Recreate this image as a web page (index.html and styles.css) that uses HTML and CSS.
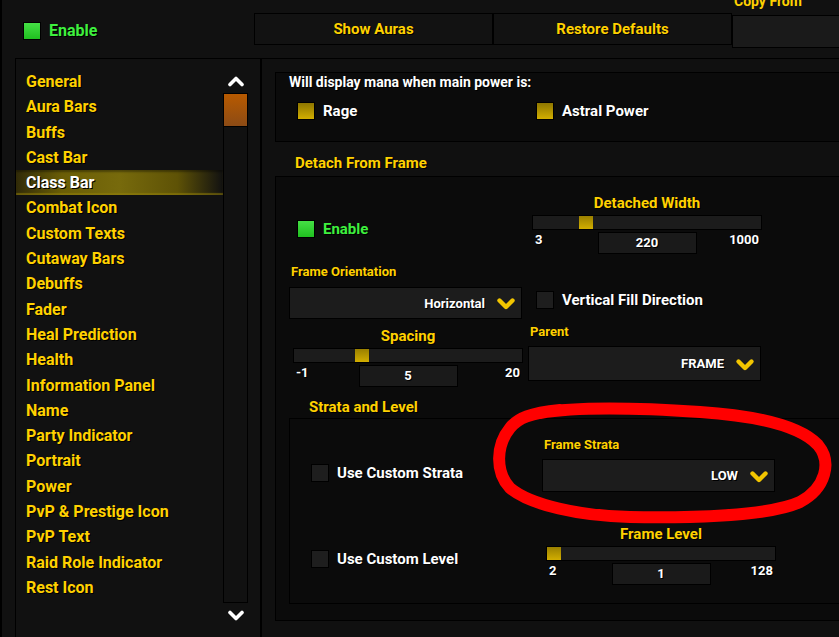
FILE: index.html
```html
<!DOCTYPE html>
<html>
<head>
<meta charset="utf-8">
<title>Unit Frames - Class Bar</title>
<link rel="stylesheet" href="styles.css">
</head>
<body>
<div class="app">
  <div class="topbar">
    <div class="top-enable"><span class="cb cb-green"></span><span class="green-text">Enable</span></div>
    <div class="btn">Show Auras</div>
    <div class="btn">Restore Defaults</div>
    <div class="copy-from">
      <div class="copy-label">Copy From</div>
      <div class="copy-box"></div>
    </div>
  </div>

  <div class="main">
    <div class="tree">
      <ul class="tree-list">
        <li>General</li>
        <li>Aura Bars</li>
        <li>Buffs</li>
        <li>Cast Bar</li>
        <li class="selected">Class Bar</li>
        <li>Combat Icon</li>
        <li>Custom Texts</li>
        <li>Cutaway Bars</li>
        <li>Debuffs</li>
        <li>Fader</li>
        <li>Heal Prediction</li>
        <li>Health</li>
        <li>Information Panel</li>
        <li>Name</li>
        <li>Party Indicator</li>
        <li>Portrait</li>
        <li>Power</li>
        <li>PvP &amp; Prestige Icon</li>
        <li>PvP Text</li>
        <li>Raid Role Indicator</li>
        <li>Rest Icon</li>
      </ul>
      <div class="scrollbar">
        <div class="arrow"><svg width="18" height="12" viewBox="0 0 18 12"><path d="M3 9.5 L9 3.5 L15 9.5" fill="none" stroke="#fff" stroke-width="3.6" stroke-linecap="round" stroke-linejoin="round"/></svg></div>
        <div class="track-v"><div class="thumb-v"></div></div>
        <div class="arrow arrow-down"><svg width="18" height="12" viewBox="0 0 18 12"><path d="M3 2.5 L9 8.5 L15 2.5" fill="none" stroke="#fff" stroke-width="3.6" stroke-linecap="round" stroke-linejoin="round"/></svg></div>
      </div>
    </div>

    <div class="content">
      <div class="group group-power">
        <div class="note">Will display mana when main power is:</div>
        <div class="cb-row">
          <div class="check"><span class="cb cb-yellow"></span><span>Rage</span></div>
          <div class="check"><span class="cb cb-yellow"></span><span>Astral Power</span></div>
        </div>
      </div>

      <div class="group-title">Detach From Frame</div>
      <div class="group group-detach">
        <div class="row">
          <div class="col">
            <div class="check check-a"><span class="cb cb-green"></span><span class="green-text">Enable</span></div>
          </div>
          <div class="col">
            <div class="slider">
              <div class="slider-label">Detached Width</div>
              <div class="track"><div class="thumb" style="margin-left: 46px"></div></div>
              <div class="slider-values"><span class="min">3</span><span class="value">220</span><span class="max">1000</span></div>
            </div>
          </div>
        </div>

        <div class="row row-b">
          <div class="col">
            <div class="dropdown">
              <div class="dd-label">Frame Orientation</div>
              <div class="dd-box dd-b"><span>Horizontal</span><svg class="chev" width="20" height="14" viewBox="0 0 20 14"><path d="M3.5 3.5 L10 10 L16.5 3.5" fill="none" stroke="#f2c500" stroke-width="4.4" stroke-linecap="round" stroke-linejoin="round"/></svg></div>
            </div>
          </div>
          <div class="col">
            <div class="check check-dd"><span class="cb"></span><span>Vertical Fill Direction</span></div>
          </div>
        </div>

        <div class="row row-c">
          <div class="col">
            <div class="slider slider-c">
              <div class="slider-label">Spacing</div>
              <div class="track"><div class="thumb" style="margin-left: 61px"></div></div>
              <div class="slider-values"><span class="min">-1</span><span class="value">5</span><span class="max">20</span></div>
            </div>
          </div>
          <div class="col">
            <div class="dropdown">
              <div class="dd-label">Parent</div>
              <div class="dd-box dd-c"><span>FRAME</span><svg class="chev" width="20" height="14" viewBox="0 0 20 14"><path d="M3.5 3.5 L10 10 L16.5 3.5" fill="none" stroke="#f2c500" stroke-width="4.4" stroke-linecap="round" stroke-linejoin="round"/></svg></div>
            </div>
          </div>
        </div>

        <div class="group-title sub-title">Strata and Level</div>
        <div class="group group-inner">
          <div class="row">
            <div class="col">
              <div class="check check-dd"><span class="cb"></span><span>Use Custom Strata</span></div>
            </div>
            <div class="col">
              <div class="dropdown">
                <div class="dd-label">Frame Strata</div>
                <div class="dd-box dd-s"><span>LOW</span><svg class="chev" width="20" height="14" viewBox="0 0 20 14"><path d="M3.5 3.5 L10 10 L16.5 3.5" fill="none" stroke="#f2c500" stroke-width="4.4" stroke-linecap="round" stroke-linejoin="round"/></svg></div>
              </div>
            </div>
          </div>
          <div class="row row-level">
            <div class="col">
              <div class="check check-l"><span class="cb"></span><span>Use Custom Level</span></div>
            </div>
            <div class="col">
              <div class="slider">
                <div class="slider-label">Frame Level</div>
                <div class="track"><div class="thumb" style="margin-left: 0px"></div></div>
                <div class="slider-values"><span class="min">2</span><span class="value">1</span><span class="max">128</span></div>
              </div>
            </div>
          </div>
        </div>
      </div>
    </div>
  </div>

  <svg class="annotation" width="839" height="637" viewBox="0 0 839 637">
    <path d="M540 413 C580 406 640 408 700 412 C760 416 800 426 818 445 C832 462 826 488 800 502 C770 516 690 518 630 517 C580 516 530 505 510 488 C495 472 496 445 510 428 C518 418 530 413 560 410" fill="none" stroke="#ff0000" stroke-width="12" stroke-linecap="round" stroke-linejoin="round"/>
    <ellipse cx="601" cy="408" rx="24" ry="5" fill="#ff0000"/>
  </svg>
</div>
</body>
</html>
```

FILE: styles.css
```css
* { box-sizing: border-box; }

html, body {
  margin: 0;
  padding: 0;
  background: #111111;
}

body {
  font-family: Roboto, "Liberation Sans", sans-serif;
  font-weight: 700;
  color: #ffffff;
}

.app {
  position: relative;
  width: 839px;
  height: 637px;
  overflow: hidden;
  padding-left: 2px;
  background: #111111;
  box-shadow: inset 2px 0 0 #000, inset 1px 0 0 #111;
}

.cb {
  display: inline-block;
  flex: 0 0 18px;
  width: 18px;
  height: 18px;
  border: 1px solid #000;
  background: #1e1e1e;
}

.cb-green {
  background: linear-gradient(to bottom, #45e045, #20c020);
}

.cb-yellow {
  background: linear-gradient(to bottom, #8e7600, #d2ae00);
}

.green-text {
  color: #3ef03e;
}

/* ---------- top bar ---------- */
.topbar {
  display: flex;
  align-items: flex-start;
  height: 58px;
}

.topbar > * {
  flex-shrink: 0;
}

.top-enable {
  display: flex;
  align-items: center;
  gap: 8px;
  width: 252px;
  padding: 21px 0 0 21px;
  font-size: 16px;
  text-shadow: 1px 1px 0 #000;
}

.btn {
  width: 239px;
  height: 32px;
  margin-top: 13px;
  border: 1px solid #000;
  background: #121212;
  color: #ffd100;
  font-size: 15px;
  line-height: 30px;
  text-align: center;
  text-shadow: 1px 1px 0 #000;
}

.copy-from {
  margin-top: -7px;
  width: 140px;
}

.copy-label {
  color: #ffd100;
  font-size: 14px;
  line-height: 16px;
  padding-left: 2px;
}

.copy-box {
  margin-top: 6px;
  height: 33px;
  border: 1px solid #000;
  background: #1a1a1a;
}

/* ---------- main ---------- */
.main {
  display: flex;
  align-items: flex-start;
  height: 579px;
}

.main > * {
  flex-shrink: 0;
}

.tree {
  display: flex;
  width: 246px;
  height: 600px;
  margin-left: 13px;
  border: 1px solid #000;
  background: #111111;
}

.tree-list {
  list-style: none;
  margin: 0;
  padding: 10px 0 0 0;
  width: 207px;
}

.tree-list li {
  height: 25.3px;
  line-height: 25.3px;
  padding-left: 10px;
  font-size: 16px;
  color: #ffd100;
  text-shadow: 1px 1px 0 #000;
  white-space: nowrap;
}

.tree-list li.selected {
  color: #ffffff;
  background: linear-gradient(to right, rgba(80, 68, 0, 0.5) 0%, #6a5d06 22%, #776a0c 50%, #5e5206 78%, rgba(40, 34, 0, 0) 100%);
  box-shadow: inset 0 2px 2px rgba(0, 0, 0, 0.35), inset 0 -2px 1px rgba(150, 130, 10, 0.55);
}

.scrollbar {
  display: flex;
  flex-direction: column;
  width: 25px;
}

.arrow {
  display: flex;
  align-items: center;
  justify-content: center;
  height: 20px;
  margin-top: 12px;
}

.arrow-down {
  margin-top: 3px;
}

.track-v {
  margin-top: 2px;
  height: 510px;
  border: 1px solid #000;
  background: #111111;
}

.thumb-v {
  height: 33px;
  background: linear-gradient(to bottom, #b85a00, #8c4b15);
  border-bottom: 1px solid #000;
}

/* ---------- content ---------- */
.content {
  width: 600px;
  height: 600px;
  border-left: 1px solid #000;
  border-top: 1px solid #000;
  padding: 13px 0 0 13px;
  background: #101010;
}

.group {
  border: 1px solid #000;
  background: #0b0b0b;
  padding-left: 13px;
}

.group-power {
  width: 580px;
  height: 70px;
}

.note {
  margin-top: 1px;
  font-size: 14px;
  line-height: 16px;
  color: #ffffff;
  text-shadow: 1px 1px 0 #000;
}

.cb-row {
  display: flex;
  margin-top: 12px;
}

.check {
  display: flex;
  align-items: center;
  gap: 8px;
  margin-left: 8px;
  font-size: 15px;
  line-height: 18px;
  color: #ffffff;
  text-shadow: 1px 1px 0 #000;
  white-space: nowrap;
}

.cb-row .check {
  flex: 0 0 239px;
  width: 239px;
  margin-left: 8px;
  margin-right: -8px;
}

.group-title {
  margin: 11px 0 0 20px;
  height: 20px;
  line-height: 20px;
  font-size: 15px;
  color: #ffd100;
  text-shadow: 1px 1px 0 #000;
}

.group-detach {
  margin-top: 3px;
  width: 580px;
  height: 445px;
  padding-top: 18px;
}

.row {
  display: flex;
  align-items: flex-start;
}

.col {
  flex: 0 0 239px;
  width: 239px;
}

.check-a { margin-top: 25px; }
.check-dd { margin-top: 27px; }
.check-l { margin-top: 24px; }

.row-b { margin-top: 12px; }
.row-c { margin-top: 5px; }
.row-level { margin-top: 34px; }

/* slider */
.slider {
  width: 230px;
  margin-left: 4px;
}

.slider-c {
  margin-top: 4px;
}

.slider-label {
  text-align: center;
  font-size: 15px;
  line-height: 16px;
  color: #ffd100;
  text-shadow: 1px 1px 0 #000;
}

.track {
  margin-top: 4px;
  height: 15px;
  border: 1px solid #000;
  background: #1c1c1c;
}

.thumb {
  width: 14px;
  height: 13px;
  background: linear-gradient(to bottom, #9a8000, #d2ae00);
}

.slider-values {
  display: grid;
  grid-template-columns: 1fr 99px 1fr;
  margin-top: 2px;
  height: 20px;
  font-size: 13px;
  color: #ffffff;
  text-shadow: 1px 1px 0 #000;
}

.slider-values .min {
  justify-self: start;
  padding-left: 3px;
  line-height: 15px;
}

.slider-values .max {
  justify-self: end;
  padding-right: 3px;
  line-height: 15px;
}

.slider-values .value {
  border: 1px solid #000;
  background: #1a1a1a;
  text-align: center;
  line-height: 20px;
}

/* dropdown */
.dropdown {
  width: 233px;
}

.dd-label {
  padding-left: 2px;
  font-size: 13px;
  line-height: 16px;
  color: #ffd100;
  text-shadow: 1px 1px 0 #000;
}

.dd-box {
  display: flex;
  align-items: center;
  justify-content: flex-end;
  gap: 11px;
  padding-right: 5px;
  border: 1px solid #000;
  background: #1c1c1c;
  font-size: 13px;
  color: #ffffff;
  text-shadow: 1px 1px 0 #000;
}

.dd-b { margin-top: 7px; height: 32px; }
.dd-c { margin-top: 6px; height: 35px; }
.dd-s { margin-top: 6px; height: 33px; }

.chev {
  display: block;
  margin-top: 2px;
}

.sub-title {
  margin: 12px 0 0 20px;
}

.group-inner {
  margin-top: 1px;
  width: 560px;
  height: 186px;
  padding-top: 18px;
}

/* annotation overlay */
.annotation {
  position: absolute;
  left: 0;
  top: 0;
  pointer-events: none;
}
```
